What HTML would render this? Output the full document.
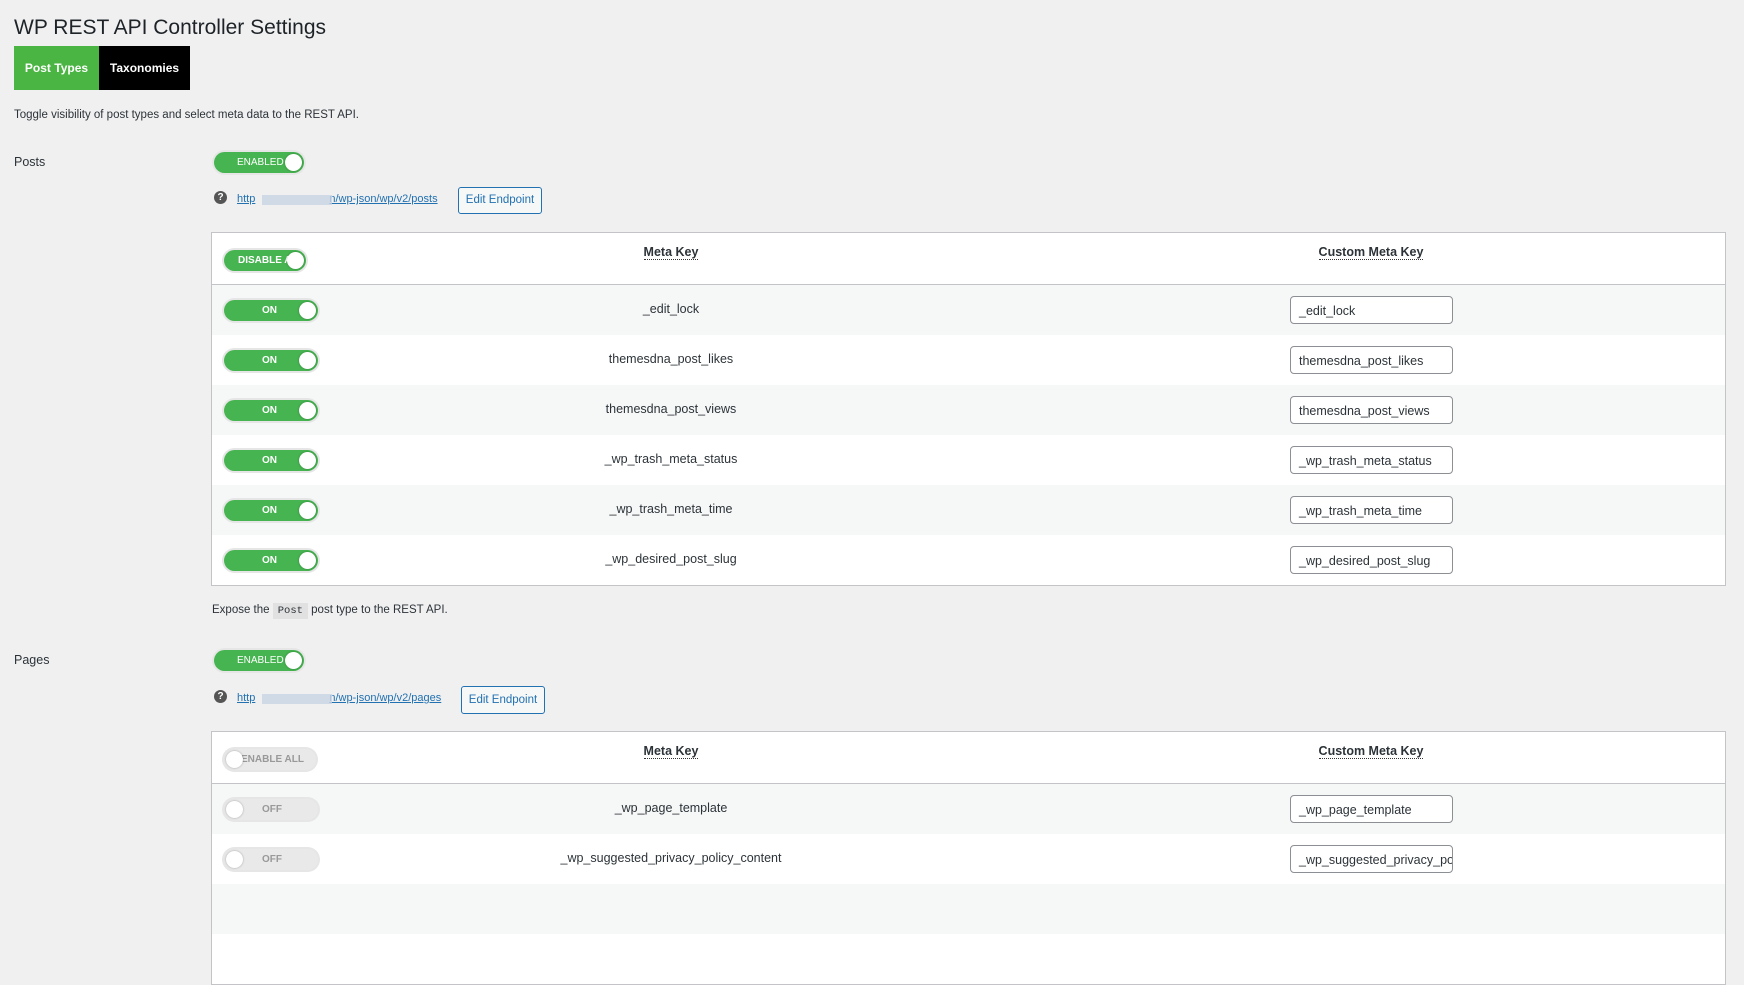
<!DOCTYPE html>
<html><head><meta charset="utf-8"><style>
*{box-sizing:border-box}
body{margin:0;background:#f0f0f1;font-family:"Liberation Sans",sans-serif;font-size:13px;color:#2c3338;width:1744px;height:893px;overflow:hidden;position:relative}
.abs{position:absolute}
h1{position:absolute;left:14px;top:16px;margin:0;font-size:21px;font-weight:400;color:#1d2327}
.tab{position:absolute;top:46px;height:44px;line-height:44px;color:#fff;font-weight:bold;font-size:12px;text-align:center}
.tg{position:absolute;height:21px;border-radius:11px;background:#46b450;color:#fff;font-size:10px;font-weight:bold;line-height:21px;box-shadow:0 0 0 2px #e6e6e6;white-space:nowrap}
.tg .k{position:absolute;top:2px;width:17px;height:17px;border-radius:50%;background:#fff;box-shadow:0 0 2px rgba(0,0,0,.3)}
.tg.off{background:#e9e9e9;color:#999}
.tg b{position:absolute}
.tbl{position:absolute;left:211px;width:1515px;border:1px solid #c3c4c7;background:#fff}
.row{position:relative;height:50px}
.row.hd{height:52px;border-bottom:1px solid #c3c4c7}
.row.g{background:#f6f7f7}
.mk{position:absolute;left:259px;width:400px;text-align:center;top:17px;font-size:12.5px}
.hd .mk{font-weight:bold;top:12px}
.u{border-bottom:1px dotted #333}
.ck{position:absolute;left:1078px;width:162px;text-align:center;font-size:12.5px}
.inp{position:absolute;left:1078px;top:11px;width:163px;height:28px;border:1px solid #8c8f94;border-radius:4px;background:#fff;padding:7px 8px;font-size:12.5px;color:#2c3338;white-space:nowrap;overflow:hidden}
.lnk{position:absolute;color:#2271b1;text-decoration:underline;font-size:11px;white-space:nowrap}
.btn{position:absolute;border:1px solid #2271b1;border-radius:3px;color:#2271b1;background:#f6f7f7;font-size:11.5px;text-align:center;line-height:25px;white-space:nowrap}
.help{position:absolute;width:13px;height:13px;border-radius:50%;background:#555;color:#fff;font-size:10px;font-weight:bold;text-align:center;line-height:13px}
.blur{position:absolute;height:10px;background:#c8d4e4;opacity:.8}
</style></head><body>
<h1>WP REST API Controller Settings</h1>
<div class="tab" style="left:14px;width:85px;background:#4ab543">Post Types</div>
<div class="tab" style="left:99px;width:91px;background:#000">Taxonomies</div>
<div class="abs" style="left:14px;top:109px;font-size:11.5px">Toggle visibility of post types and select meta data to the REST API.</div>

<div class="abs" style="left:14px;top:155px;font-size:12.5px">Posts</div>
<div class="tg" style="left:214px;top:152px;width:90px"><b style="left:23px;font-weight:normal">ENABLED</b><div class="k" style="right:2px"></div></div>
<div class="help" style="left:214px;top:191px">?</div>
<div class="lnk" style="left:237px;top:193px">http<span style="display:inline-block;width:74px"></span>n/wp-json/wp/v2/posts</div>
<div class="blur" style="left:262px;top:195px;width:70px"></div>
<div class="btn" style="left:458px;top:187px;width:84px;height:27px">Edit Endpoint</div>

<div class="tbl" style="top:232px">
<div class="row hd"><div class="tg" style="left:12px;top:17px;width:82px"><b style="left:14px">DISABLE ALL</b><div class="k" style="right:2px"></div></div><div class="mk"><span class="u">Meta Key</span></div><div class="ck" style="top:12px;font-weight:bold"><span class="u">Custom Meta Key</span></div></div>
<div class="row g"><div class="tg" style="left:12px;top:15px;width:94px"><b style="left:38px">ON</b><div class="k" style="right:2px"></div></div><div class="mk">_edit_lock</div><div class="inp">_edit_lock</div></div>
<div class="row"><div class="tg" style="left:12px;top:15px;width:94px"><b style="left:38px">ON</b><div class="k" style="right:2px"></div></div><div class="mk">themesdna_post_likes</div><div class="inp">themesdna_post_likes</div></div>
<div class="row g"><div class="tg" style="left:12px;top:15px;width:94px"><b style="left:38px">ON</b><div class="k" style="right:2px"></div></div><div class="mk">themesdna_post_views</div><div class="inp">themesdna_post_views</div></div>
<div class="row"><div class="tg" style="left:12px;top:15px;width:94px"><b style="left:38px">ON</b><div class="k" style="right:2px"></div></div><div class="mk">_wp_trash_meta_status</div><div class="inp">_wp_trash_meta_status</div></div>
<div class="row g"><div class="tg" style="left:12px;top:15px;width:94px"><b style="left:38px">ON</b><div class="k" style="right:2px"></div></div><div class="mk">_wp_trash_meta_time</div><div class="inp">_wp_trash_meta_time</div></div>
<div class="row"><div class="tg" style="left:12px;top:15px;width:94px"><b style="left:38px">ON</b><div class="k" style="right:2px"></div></div><div class="mk">_wp_desired_post_slug</div><div class="inp">_wp_desired_post_slug</div></div>
</div>
<div class="abs" style="left:212px;top:604px;font-size:11.5px">Expose the <code style="background:#e1e1e1;padding:2px 5px;font-family:'Liberation Mono',monospace;font-size:10.5px">Post</code> post type to the REST API.</div>

<div class="abs" style="left:14px;top:653px;font-size:12.5px">Pages</div>
<div class="tg" style="left:214px;top:650px;width:90px"><b style="left:23px;font-weight:normal">ENABLED</b><div class="k" style="right:2px"></div></div>
<div class="help" style="left:214px;top:690px">?</div>
<div class="lnk" style="left:237px;top:692px">http<span style="display:inline-block;width:74px"></span>n/wp-json/wp/v2/pages</div>
<div class="blur" style="left:262px;top:694px;width:70px"></div>
<div class="btn" style="left:461px;top:686px;width:84px;height:28px;line-height:26px">Edit Endpoint</div>

<div class="tbl" style="top:731px">
<div class="row hd"><div class="tg off" style="left:12px;top:17px;width:92px"><b style="left:17px">ENABLE ALL</b><div class="k" style="left:2px"></div></div><div class="mk"><span class="u">Meta Key</span></div><div class="ck" style="top:12px;font-weight:bold"><span class="u">Custom Meta Key</span></div></div>
<div class="row g"><div class="tg off" style="left:12px;top:15px;width:94px"><b style="left:38px">OFF</b><div class="k" style="left:2px"></div></div><div class="mk">_wp_page_template</div><div class="inp">_wp_page_template</div></div>
<div class="row"><div class="tg off" style="left:12px;top:15px;width:94px"><b style="left:38px">OFF</b><div class="k" style="left:2px"></div></div><div class="mk">_wp_suggested_privacy_policy_content</div><div class="inp">_wp_suggested_privacy_policy_content</div></div>
<div class="row g"></div>
<div class="row"></div>
</div>
</body></html>
